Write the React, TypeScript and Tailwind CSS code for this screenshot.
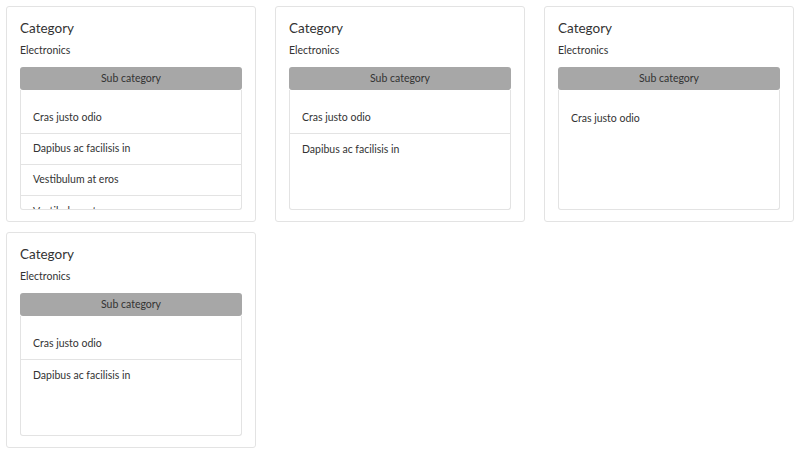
import React from "react";

const cards = [
  ["Cras justo odio", "Dapibus ac facilisis in", "Vestibulum at eros", "Vestibulum at eros"],
  ["Cras justo odio", "Dapibus ac facilisis in"],
  ["Cras justo odio"],
  ["Cras justo odio", "Dapibus ac facilisis in"],
];

function Card({ items }: { items: string[] }) {
  return (
    <div className="w-[250px] h-[216px] border border-[#e3e3e3] rounded-[3px] bg-white px-[13px] pt-[10px] flex flex-col">
      <div className="text-[13.5px] leading-[22px] text-[#333]">Category</div>
      <div className="text-[10.5px] leading-[16px] mt-[3px] text-[#333]">Electronics</div>
      <div className="mt-[9px] h-[23px] rounded-[3px] bg-[#a7a7a7] text-[10.5px] text-[#333] flex items-center justify-center">
        Sub category
      </div>
      <div className="h-[120px] border border-t-0 border-[#e3e3e3] rounded-b-[3px] overflow-hidden pt-[13px]">
        {items.map((t, i) => (
          <div
            key={i}
            className={`h-[31px] px-[12px] flex items-center text-[10.5px] text-[#333] ${i < items.length - 1 ? "border-b border-[#e3e3e3]" : ""}`}
          >
            {t}
          </div>
        ))}
      </div>
    </div>
  );
}

export default function App() {
  return (
    <div className="w-[800px] h-[450px] bg-white p-[6px] font-['Lato',sans-serif]">
      <div className="grid grid-cols-[250px_250px_250px] gap-x-[19px] gap-y-[10px]">
        {cards.map((c, i) => (
          <Card key={i} items={c} />
        ))}
      </div>
    </div>
  );
}
